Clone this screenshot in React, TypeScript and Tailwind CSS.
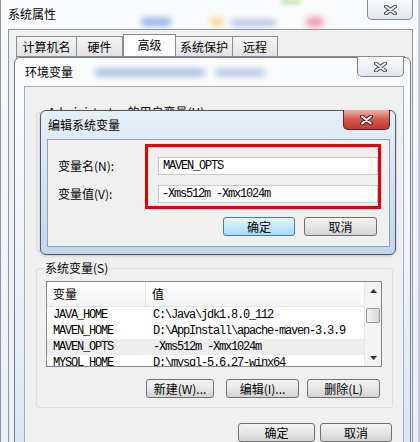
import React from 'react';

const cjk = "font-['Noto_Sans_CJK_SC',sans-serif]";
const mono = "font-['Liberation_Mono','Noto_Sans_CJK_SC',monospace] tracking-[-1.2px]";

const CloseGlyph = ({ red }: { red?: boolean }) => (
  <svg width="13" height="10" viewBox="0 0 13 10">
    <path d="M2 1.5 L11 8.5 M11 1.5 L2 8.5" stroke={red ? '#5a1a14' : '#4b4f55'} strokeWidth="4" strokeLinecap="round" fill="none" />
    <path d="M2 1.5 L11 8.5 M11 1.5 L2 8.5" stroke={red ? '#ffffff' : '#eef0f2'} strokeWidth="2" strokeLinecap="round" fill="none" />
  </svg>
);

const CloseBtn = ({ red, className }: { red?: boolean; className: string }) => (
  <div
    className={`absolute flex items-center justify-center rounded-b-[5px] border border-t-0 ${
      red
        ? 'border-[#5e2622] bg-gradient-to-b from-[#eab4a7] via-[#d2594c] to-[#c03a2d]'
        : 'border-[#7b8694] bg-gradient-to-b from-[#fbfcfd] via-[#eef2f6] to-[#dfe6ee]'
    } ${className}`}
  >
    <CloseGlyph red={red} />
  </div>
);

const Btn = ({ children, className, primary }: { children: React.ReactNode; className: string; primary?: boolean }) => (
  <div
    className={`flex h-[19px] items-center justify-center rounded-[3px] border ${
      primary
        ? 'border-[#3c7fb1] bg-gradient-to-b from-[#eaf6fd] via-[#c4e7fb] to-[#a9daf6]'
        : 'border-[#707070] bg-gradient-to-b from-[#f4f4f4] via-[#e6e6e6] to-[#d4d4d4]'
    } ${className}`}
  >
    {children}
  </div>
);

const rows = [
  { name: 'JAVA_HOME', value: 'C:\\Java\\jdk1.8.0_112' },
  { name: 'MAVEN_HOME', value: 'D:\\AppInstall\\apache-maven-3.3.9' },
  { name: 'MAVEN_OPTS', value: '-Xms512m -Xmx1024m', sel: true },
  { name: 'MYSQL_HOME', value: 'D:\\mysql-5.6.27-winx64' },
];

export default function App() {
  return (
    <div className={`relative h-[442px] w-[420px] overflow-hidden bg-[#bcd0e6] text-[12px] text-black ${cjk}`}>
      {/* 系统属性 */}
      <div className="absolute left-0 top-0 h-[480px] w-[418px] border-l border-[#8a96a4] bg-gradient-to-b from-[#fafbfc] to-[#e8eef5]">
        <span className="absolute left-[140px] top-[18px] h-[8px] w-[30px] rounded-full bg-[#8fb0e8] blur-[3px]" />
        <span className="absolute left-[210px] top-[18px] h-[8px] w-[12px] rounded-full bg-[#f2d27a] blur-[3px]" />
        <span className="absolute left-[230px] top-[20px] h-[6px] w-[45px] rounded-full bg-[#a8bde0] blur-[3px]" />
        <span className="absolute left-[305px] top-[17px] h-[10px] w-[18px] rounded-full bg-[#ef9aa6] blur-[3px]" />
        <span className="absolute left-[280px] top-[0px] h-[4px] w-[20px] rounded-full bg-[#b5e3a8] blur-[2px]" />
        <div className="h-[29px] pl-[7px] pt-[5px] leading-[18px]">系统属性</div>
        <CloseBtn className="left-[366px] top-0 h-[20px] w-[46px]" />
        <div className="ml-[7px] mr-[5px] h-[440px] border border-[#8e96a1] bg-[#f0f0f0] pl-[7px] pt-[4px]">
          <div className="flex h-[22px] items-end">
            <div className="flex h-[20px] w-[61px] items-center justify-center border border-b-0 border-[#898c95] bg-gradient-to-b from-[#f5f5f5] to-[#e2e2e2]">计算机名</div>
            <div className="flex h-[20px] w-[46px] items-center justify-center border border-b-0 border-l-0 border-[#898c95] bg-gradient-to-b from-[#f5f5f5] to-[#e2e2e2]">硬件</div>
            <div className="flex h-[22px] w-[53px] items-center justify-center border border-b-0 border-[#898c95] bg-white pb-[2px]">高级</div>
            <div className="flex h-[20px] w-[57px] items-center justify-center border border-b-0 border-l-0 border-[#898c95] bg-gradient-to-b from-[#f5f5f5] to-[#e2e2e2]">系统保护</div>
            <div className="flex h-[20px] w-[45px] items-center justify-center border border-b-0 border-l-0 border-[#898c95] bg-gradient-to-b from-[#f5f5f5] to-[#e2e2e2]">远程</div>
          </div>
          <div className="mr-[7px] h-[400px] border border-[#898c95] bg-[#fbfbfb]" />
        </div>
      </div>

      {/* 环境变量 */}
      <div className="absolute left-[14px] top-[57px] h-[400px] w-[397px] rounded-t-[6px] border border-[#6f7d8f] bg-gradient-to-b from-[#fbfcfd] via-[#eef3f8] to-[#dae5f1]">
        <span className="absolute left-[80px] top-[11px] h-[7px] w-[110px] rounded-full bg-[#9fb6d8] blur-[3px]" />
        <span className="absolute left-[200px] top-[11px] h-[7px] w-[50px] rounded-full bg-[#aec2de] blur-[3px]" />
        <div className="h-[28px] pl-[10px] leading-[28px]">环境变量</div>
        <CloseBtn className="left-[342px] top-[-1px] h-[20px] w-[47px]" />
        <div className="ml-[9px] mr-[6px] h-[370px] border border-[#a3aebc] bg-[#f0f0f0]">
          <div className="h-[174px] pt-[25px]">
            <div className="ml-[11px] mr-[10px] h-[140px] rounded-[3px] border border-[#d5dfe5] pl-[10px]">
              <div className="-mt-[8px] w-fit bg-[#f0f0f0] px-[1px] leading-[14px]">Administrator 的用户变量(U)</div>
            </div>
          </div>
          <fieldset className="ml-[11px] mr-[10px] h-[147px] rounded-[3px] border border-[#d5dfe5] pl-[9px]">
            <legend className="ml-[-2px] px-[1px] leading-[14px]">系统变量(S)</legend>
            <div className="mt-[6px] flex h-[86px] w-[336px] overflow-hidden border border-[#828790] bg-white">
              <div className="flex-1">
                <div className="flex h-[25px] items-center border-b border-[#e5e5e5] bg-gradient-to-b from-white to-[#f4f5f7]">
                  <div className="h-full w-[99px] border-r border-[#e2e3e5] pl-[6px] leading-[24px]">变量</div>
                  <div className="pl-[6px]">值</div>
                </div>
                {rows.map((r) => (
                  <div key={r.name} className={`flex h-[16px] items-center leading-[16px] ${r.sel ? 'bg-[#eeeeee]' : ''}`}>
                    <div className={`w-[100px] pl-[6px] ${mono}`}>{r.name}</div>
                    <div className={`pl-[6px] whitespace-nowrap ${mono}`}>{r.value}</div>
                  </div>
                ))}
              </div>
              <div className="flex w-[17px] flex-col items-center border-l border-[#e8e8e8] bg-[#f4f4f4]">
                <div className="flex h-[17px] items-center">
                  <svg width="7" height="4" viewBox="0 0 7 4"><path d="M0 4 L3.5 0 L7 4 Z" fill="#333" /></svg>
                </div>
                <div className="mt-[9px] h-[15px] w-[14px] rounded-[2px] border border-[#959595] bg-gradient-to-r from-[#f3f3f3] to-[#d8d8d8]" />
                <div className="flex-1" />
                <div className="flex h-[17px] items-center">
                  <svg width="7" height="4" viewBox="0 0 7 4"><path d="M0 0 L7 0 L3.5 4 Z" fill="#333" /></svg>
                </div>
              </div>
            </div>
            <div className="mt-[12px] flex">
              <Btn className="ml-[100px] w-[68px]">新建(W)...</Btn>
              <Btn className="ml-[12px] w-[73px]">编辑(I)...</Btn>
              <Btn className="ml-[8px] w-[73px]">删除(L)</Btn>
            </div>
          </fieldset>
          <div className="mr-[11px] mt-[15px] flex justify-end gap-[5px]">
            <Btn className="w-[77px]">确定</Btn>
            <Btn className="w-[72px]">取消</Btn>
          </div>
        </div>
      </div>

      {/* 编辑系统变量 */}
      <div className="absolute left-[40px] top-[110px] h-[145px] w-[356px] rounded-[6px] border border-[#4c5c70] bg-gradient-to-b from-[#e6eff8] to-[#c3d7ec] shadow-[0_1px_3px_rgba(0,0,0,0.2)]">
        <div className="h-[28px] pl-[7px] leading-[28px]">编辑系统变量</div>
        <CloseBtn red className="left-[302px] top-[-1px] h-[20px] w-[47px]" />
        <div className="relative ml-[6px] mr-[5px] h-[108px] border border-[#8da2b8] bg-[#f0f0f0] pt-[17px]">
          <div className="flex h-[18px] items-center">
            <div className="w-[110px] pl-[10px]">变量名(N):</div>
            <div className={`h-[18px] w-[220px] border border-[#c5c9d0] bg-white pl-[4px] leading-[16px] ${mono}`}>MAVEN_OPTS</div>
          </div>
          <div className="mt-[10px] flex h-[18px] items-center">
            <div className="w-[110px] pl-[10px]">变量值(V):</div>
            <div className={`h-[18px] w-[220px] border border-[#c5c9d0] bg-white pl-[3px] leading-[16px] ${mono}`}>-Xms512m -Xmx1024m</div>
          </div>
          <div className="mt-[14px] flex">
            <Btn primary className="ml-[175px] w-[72px]">确定</Btn>
            <Btn className="ml-[9px] w-[73px]">取消</Btn>
          </div>
          <div className="absolute left-[97px] top-[4px] h-[65px] w-[236px] border-[3px] border-[#e60000]" />
        </div>
      </div>
    </div>
  );
}
